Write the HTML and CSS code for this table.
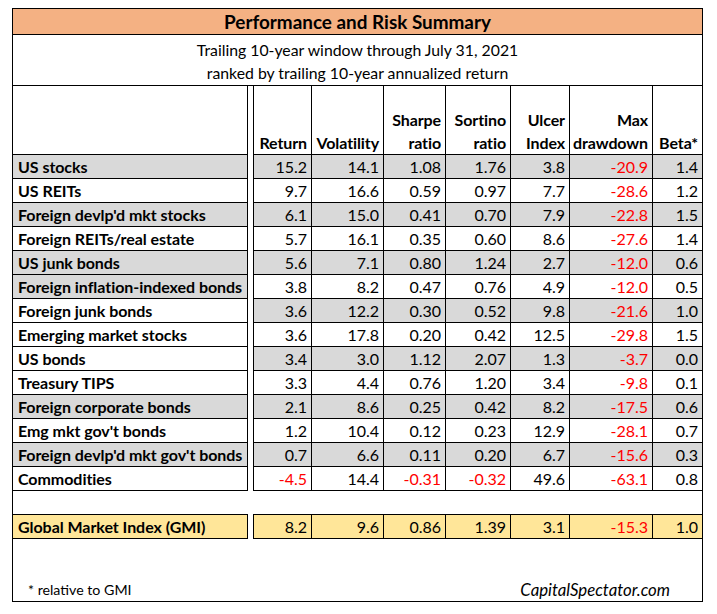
FILE: index.html
```html
<!DOCTYPE html>
<html>
<head>
<meta charset="utf-8">
<link rel="stylesheet" href="styles.css">
</head>
<body>
<div class="sheet">
<table class="summary">
  <colgroup>
    <col class="c-name"><col class="c-gap"><col class="c-ret"><col class="c-vol"><col class="c-sha"><col class="c-sor"><col class="c-ulc"><col class="c-mdd"><col class="c-beta">
  </colgroup>
  <tr class="title-row"><td colspan="9">Performance and Risk Summary</td></tr>
  <tr class="sub-row"><td colspan="9"><div>Trailing 10-year window through July 31, 2021</div><div>ranked by trailing 10-year annualized return</div></td></tr>
  <tr class="head-row">
    <td class="name"></td><td class="gap"></td>
    <td class="v">Return</td><td class="v">Volatility</td><td class="v">Sharpe<br>ratio</td><td class="v">Sortino<br>ratio</td><td class="v">Ulcer<br>Index</td><td class="v">Max<br>drawdown</td><td class="v">Beta*</td>
  </tr>
  <tr class="data alt"><td class="name g">US stocks</td><td class="gap"></td><td class="v">15.2</td><td class="v">14.1</td><td class="v">1.08</td><td class="v">1.76</td><td class="v">3.8</td><td class="v neg">-20.9</td><td class="v">1.4</td></tr>
  <tr class="data"><td class="name">US REITs</td><td class="gap"></td><td class="v">9.7</td><td class="v">16.6</td><td class="v">0.59</td><td class="v">0.97</td><td class="v">7.7</td><td class="v neg">-28.6</td><td class="v">1.2</td></tr>
  <tr class="data alt"><td class="name g">Foreign devlp'd mkt stocks</td><td class="gap"></td><td class="v">6.1</td><td class="v">15.0</td><td class="v">0.41</td><td class="v">0.70</td><td class="v">7.9</td><td class="v neg">-22.8</td><td class="v">1.5</td></tr>
  <tr class="data"><td class="name">Foreign REITs/real estate</td><td class="gap"></td><td class="v">5.7</td><td class="v">16.1</td><td class="v">0.35</td><td class="v">0.60</td><td class="v">8.6</td><td class="v neg">-27.6</td><td class="v">1.4</td></tr>
  <tr class="data alt"><td class="name g">US junk bonds</td><td class="gap"></td><td class="v">5.6</td><td class="v">7.1</td><td class="v">0.80</td><td class="v">1.24</td><td class="v">2.7</td><td class="v neg">-12.0</td><td class="v">0.6</td></tr>
  <tr class="data"><td class="name g">Foreign inflation-indexed bonds</td><td class="gap"></td><td class="v">3.8</td><td class="v">8.2</td><td class="v">0.47</td><td class="v">0.76</td><td class="v">4.9</td><td class="v neg">-12.0</td><td class="v">0.5</td></tr>
  <tr class="data alt"><td class="name">Foreign junk bonds</td><td class="gap"></td><td class="v">3.6</td><td class="v">12.2</td><td class="v">0.30</td><td class="v">0.52</td><td class="v">9.8</td><td class="v neg">-21.6</td><td class="v">1.0</td></tr>
  <tr class="data"><td class="name">Emerging market stocks</td><td class="gap"></td><td class="v">3.6</td><td class="v">17.8</td><td class="v">0.20</td><td class="v">0.42</td><td class="v">12.5</td><td class="v neg">-29.8</td><td class="v">1.5</td></tr>
  <tr class="data alt"><td class="name">US bonds</td><td class="gap"></td><td class="v">3.4</td><td class="v">3.0</td><td class="v">1.12</td><td class="v">2.07</td><td class="v">1.3</td><td class="v neg">-3.7</td><td class="v">0.0</td></tr>
  <tr class="data"><td class="name">Treasury TIPS</td><td class="gap"></td><td class="v">3.3</td><td class="v">4.4</td><td class="v">0.76</td><td class="v">1.20</td><td class="v">3.4</td><td class="v neg">-9.8</td><td class="v">0.1</td></tr>
  <tr class="data alt"><td class="name g">Foreign corporate bonds</td><td class="gap"></td><td class="v">2.1</td><td class="v">8.6</td><td class="v">0.25</td><td class="v">0.42</td><td class="v">8.2</td><td class="v neg">-17.5</td><td class="v">0.6</td></tr>
  <tr class="data"><td class="name">Emg mkt gov't bonds</td><td class="gap"></td><td class="v">1.2</td><td class="v">10.4</td><td class="v">0.12</td><td class="v">0.23</td><td class="v">12.9</td><td class="v neg">-28.1</td><td class="v">0.7</td></tr>
  <tr class="data alt"><td class="name g">Foreign devlp'd mkt gov't bonds</td><td class="gap"></td><td class="v">0.7</td><td class="v">6.6</td><td class="v">0.11</td><td class="v">0.20</td><td class="v">6.7</td><td class="v neg">-15.6</td><td class="v">0.3</td></tr>
  <tr class="data"><td class="name">Commodities</td><td class="gap"></td><td class="v neg">-4.5</td><td class="v">14.4</td><td class="v neg">-0.31</td><td class="v neg">-0.32</td><td class="v">49.6</td><td class="v neg">-63.1</td><td class="v">0.8</td></tr>
  <tr class="blank"><td colspan="9"></td></tr>
  <tr class="data gmi"><td class="name">Global Market Index (GMI)</td><td class="gap"></td><td class="v">8.2</td><td class="v">9.6</td><td class="v">0.86</td><td class="v">1.39</td><td class="v">3.1</td><td class="v neg">-15.3</td><td class="v">1.0</td></tr>
  <tr class="blank"><td colspan="9"></td></tr>
  <tr class="foot-row"><td colspan="9"><div class="foot"><span class="note">* relative to GMI</span><span class="brand">CapitalSpectator.com</span></div></td></tr>
</table>
</div>
</body>
</html>
```

FILE: styles.css
```css
body {
  margin: 0;
  background: #ffffff;
  color: #000000;
  font-family: Lato, "Liberation Sans", sans-serif;
}

.sheet {
  padding: 8px 0 0 12px;
}

.summary {
  border-collapse: collapse;
  table-layout: fixed;
  width: 691px;
  font-size: 16px;
}

.c-name { width: 235px; }
.c-gap { width: 6px; }
.c-ret { width: 58px; }
.c-vol { width: 72px; }
.c-sha { width: 62px; }
.c-sor { width: 65px; }
.c-ulc { width: 59px; }
.c-mdd { width: 83px; }
.c-beta { width: 50px; }

.summary td {
  padding: 0;
  vertical-align: bottom;
}

.title-row td {
  height: 23px;
  border: 1px solid #000;
  background: #f4b183;
  text-align: center;
  font-weight: 700;
  font-size: 18.9px;
  line-height: 20px;
  padding-bottom: 2px;
}

.sub-row td {
  height: 49px;
  border: 1px solid #000;
  text-align: center;
  font-size: 15.8px;
  line-height: 23px;
  padding-bottom: 1px;
}

.head-row td {
  height: 68px;
  line-height: 23px;
  font-weight: 700;
}

.head-row .v,
.head-row .name {
  border: 1px solid #000;
}

.head-row .v {
  text-align: right;
  padding-right: 4px;
  letter-spacing: -0.1px;
}

.data td {
  height: 21px;
  line-height: 18px;
  padding-bottom: 2px;
}

.data .name {
  border: 1px solid #000;
  font-weight: 700;
  text-align: left;
  padding-left: 5px;
  white-space: nowrap;
  letter-spacing: -0.05px;
}

.data .v {
  border: 1px solid #000;
  text-align: right;
  padding-right: 4px;
}

.gap {
  border: none;
  background: #ffffff;
}

.name.g,
.alt .v {
  background: #d9d9d9;
}

.gmi .name,
.gmi .v {
  background: #ffe699;
}

.neg {
  color: #ff0000;
}

.blank td {
  height: 23px;
  border-left: 1px solid #000;
  border-right: 1px solid #000;
}

.foot-row td {
  height: 39px;
  border: 1px solid #000;
  border-top: none;
}

.foot {
  display: flex;
  justify-content: space-between;
  align-items: flex-end;
  padding: 0 32px 2px 15px;
  line-height: 18px;
}

.note {
  font-size: 14.2px;
}

.brand {
  font-style: italic;
  font-size: 16.8px;
}
```
